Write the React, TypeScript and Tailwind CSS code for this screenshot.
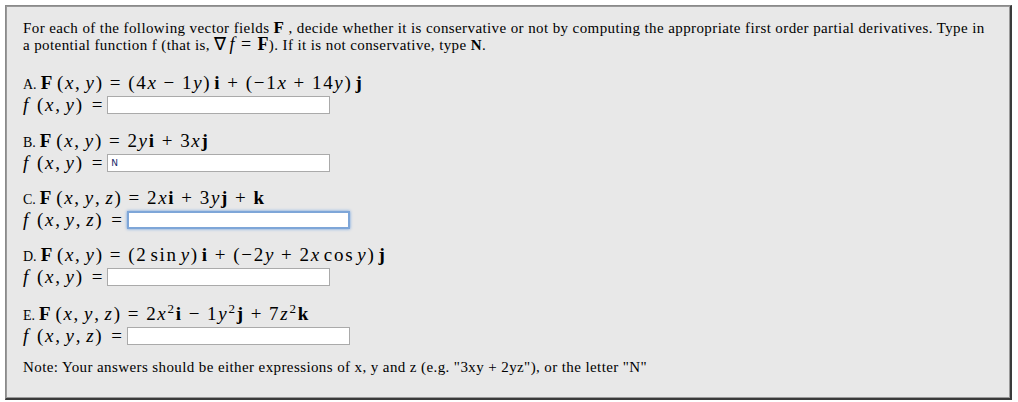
import React from 'react';

const serif = { fontFamily: '"Liberation Serif", "Times New Roman", serif' };

// small helpers for the math bits
const V = ({ children }: { children: React.ReactNode }) => <i className="italic">{children}</i>;
const B = ({ children }: { children: React.ReactNode }) => <b className="font-bold">{children}</b>;
const Op = ({ children }: { children: React.ReactNode }) => <span className="mx-[6px]">{children}</span>;
const S = () => <span className="inline-block w-[3px]" />;
const Sup = ({ children }: { children: React.ReactNode }) => (
  <span className="relative -top-[7px] text-[13px]">{children}</span>
);
const Comma = () => <span className="mr-[4px]">,</span>;

function Math({ children }: { children: React.ReactNode }) {
  return <span className="text-[19px] leading-[20px] tracking-[1.7px] whitespace-nowrap">{children}</span>;
}

function Answer({ vars, value, focused }: { vars: string[]; value?: string; focused?: boolean }) {
  return (
    <div className="flex items-center h-[20px]">
      <Math>
        <V>f</V>
        <span className="inline-block w-[7px]" />
        <span>(</span>
        {vars.map((v, i) => (
          <React.Fragment key={v}>
            {i > 0 && <Comma />}
            <V>{v}</V>
          </React.Fragment>
        ))}
        <span>)</span>
        <span className="ml-[8px] mr-[3px]">=</span>
      </Math>
      <input
        readOnly
        value={value ?? ''}
        className={
          'h-[18px] w-[223px] bg-white px-[3px] text-[9px] outline-none ' +
          (focused
            ? 'border-2 border-[#7ea6d8] shadow-[0_0_3px_#6a9fe0]'
            : 'border border-[#aaaaaa]')
        }
        style={{ fontFamily: '"DejaVu Sans", sans-serif', color: '#1a2b6b' }}
      />
    </div>
  );
}

function Row({ label, children }: { label: string; children: React.ReactNode }) {
  return (
    <div className="flex items-baseline h-[22px]">
      <span className="text-[14px] mr-[4px]">{label}</span>
      <Math>{children}</Math>
    </div>
  );
}

export default function App() {
  return (
    <div className="w-[1018px] h-[402px] bg-white pt-[5px] pl-[5px]" style={serif}>
      <div className="w-[1007px] h-[395px] border-t border-l border-[#8a8a8a] border-r-2 border-b-2 border-r-[#3a3a3a] border-b-[#3a3a3a]">
        <div className="w-full h-full border border-[#9a9a9a] bg-[#e8e8e8] pl-[16px] pr-[16px] pt-[13px] text-black">
          <p className="text-[15px] leading-[17px] tracking-[0.4px]">
            For each of the following vector fields <span className="text-[17px] font-bold leading-[10px]">F</span> , decide whether it is conservative or not by computing the appropriate first order partial derivatives. Type in a potential function f (that is,{' '}
            <span className="text-[18px] leading-[10px]">
              ∇<S /><V>f</V><Op>=</Op><B>F</B>
            </span>
            ). If it is not conservative, type <b>N</b>.
          </p>

          <div className="mt-[19px] flex flex-col">
            <Row label="A.">
              <B>F</B><S />(<V>x</V><Comma /><V>y</V>)<Op>=</Op>(4<V>x</V><Op>−</Op>1<V>y</V>)<S /><B>i</B><Op>+</Op>(−1<V>x</V><Op>+</Op>14<V>y</V>)<S /><B>j</B>
            </Row>
            <Answer vars={['x', 'y']} />
          </div>

          <div className="mt-[16px] flex flex-col">
            <Row label="B.">
              <B>F</B><S />(<V>x</V><Comma /><V>y</V>)<Op>=</Op>2<V>y</V><B>i</B><Op>+</Op>3<V>x</V><B>j</B>
            </Row>
            <Answer vars={['x', 'y']} value="N" />
          </div>

          <div className="mt-[15px] flex flex-col">
            <Row label="C.">
              <B>F</B><S />(<V>x</V><Comma /><V>y</V><Comma /><V>z</V>)<Op>=</Op>2<V>x</V><B>i</B><Op>+</Op>3<V>y</V><B>j</B><Op>+</Op><B>k</B>
            </Row>
            <Answer vars={['x', 'y', 'z']} focused />
          </div>

          <div className="mt-[15px] flex flex-col">
            <Row label="D.">
              <B>F</B><S />(<V>x</V><Comma /><V>y</V>)<Op>=</Op>(2<S />sin<S /><V>y</V>)<S /><B>i</B><Op>+</Op>(−2<V>y</V><Op>+</Op>2<V>x</V><S />cos<S /><V>y</V>)<S /><B>j</B>
            </Row>
            <Answer vars={['x', 'y']} />
          </div>

          <div className="mt-[17px] flex flex-col">
            <Row label="E.">
              <B>F</B><S />(<V>x</V><Comma /><V>y</V><Comma /><V>z</V>)<Op>=</Op>2<V>x</V><Sup>2</Sup><B>i</B><Op>−</Op>1<V>y</V><Sup>2</Sup><B>j</B><Op>+</Op>7<V>z</V><Sup>2</Sup><B>k</B>
            </Row>
            <Answer vars={['x', 'y', 'z']} />
          </div>

          <p className="mt-[13px] text-[15px] leading-[17px] tracking-[0.4px]">
            Note: Your answers should be either expressions of x, y and z (e.g. "3xy + 2yz"), or the letter "N"
          </p>
        </div>
      </div>
    </div>
  );
}
